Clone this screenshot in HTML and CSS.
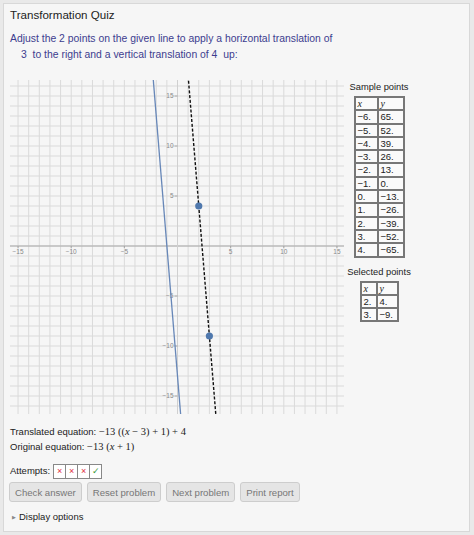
FILE: index.html
```html
<!DOCTYPE html>
<html lang="en">
<head>
    <meta charset="UTF-8">
    <meta name="viewport" content="width=device-width, initial-scale=1.0">
    <title>Transformation Quiz</title>
    <link rel="stylesheet" href="styles.css">
</head>
<body>
    <div class="quiz">
        <div class="title">Transformation Quiz</div>
        <div class="prompt">
            <div>Adjust the 2 points on the given line to apply a horizontal translation of</div>
            <div class="indent">3&nbsp; to the right and a vertical translation of 4&nbsp; up:</div>
        </div>

        <div class="work">
            <svg id="plot" class="plot" width="334" height="334" viewBox="0 0 334 334"></svg>
            <div class="side">
                <div class="caption">Sample points</div>
                <table class="pts sample">
                    <thead><tr><th>x</th><th>y</th></tr></thead>
                    <tbody id="sample-rows"></tbody>
                </table>
                <div class="caption second">Selected points</div>
                <table class="pts selected">
                    <thead><tr><th>x</th><th>y</th></tr></thead>
                    <tbody>
                        <tr><td>2.</td><td>4.</td></tr>
                        <tr><td>3.</td><td>&minus;9.</td></tr>
                    </tbody>
                </table>
            </div>
        </div>

        <div class="eqs">
            <div>Translated equation: <span class="math">&minus;13 ((<i>x</i> &minus; 3) + 1) + 4</span></div>
            <div>Original equation: <span class="math">&minus;13 (<i>x</i> + 1)</span></div>
        </div>

        <div class="attempts">
            <span>Attempts:</span>
            <span class="marks">
                <span class="mark wrong">&times;</span>
                <span class="mark wrong">&times;</span>
                <span class="mark wrong">&times;</span>
                <span class="mark right">&#10003;</span>
            </span>
        </div>

        <div class="buttons">
            <button class="btn">Check answer</button>
            <button class="btn">Reset problem</button>
            <button class="btn">Next problem</button>
            <button class="btn">Print report</button>
        </div>

        <div class="options"><span class="arrow">&#9654;</span>Display options</div>
    </div>

    <script>
        const NS = 'http://www.w3.org/2000/svg';
        const OX = 167.5, OY = 166, SX = 10.63, SY = 10;
        const plot = document.getElementById('plot');

        const px = x => OX + x * SX;
        const py = y => OY - y * SY;

        function add(tag, attrs, text) {
            const el = document.createElementNS(NS, tag);
            for (const k in attrs) el.setAttribute(k, attrs[k]);
            if (text !== undefined) el.textContent = text;
            plot.appendChild(el);
            return el;
        }

        function fmt(n) {
            return (n < 0 ? '\u2212' + Math.abs(n) : n) + '.';
        }

        // сетка
        for (let i = -15; i <= 15; i++) {
            add('line', { x1: px(i), y1: 0, x2: px(i), y2: 334, class: 'grid' });
        }
        for (let j = -16; j <= 16; j++) {
            add('line', { x1: 0, y1: py(j), x2: 334, y2: py(j), class: 'grid' });
        }

        // оси
        add('line', { x1: 0, y1: OY, x2: 334, y2: OY, class: 'axis' });
        add('line', { x1: OX, y1: 0, x2: OX, y2: 334, class: 'axis-y' });

        [-15, -10, -5, 5, 10, 15].forEach(v => {
            add('line', { x1: px(v), y1: OY, x2: px(v), y2: OY + 2, class: 'tick' });
            add('text', { x: px(v), y: OY + 8, class: 'label', 'text-anchor': 'middle' }, v < 0 ? '\u2212' + (-v) : v);
            add('line', { x1: OX - 3, y1: py(v), x2: OX, y2: py(v), class: 'tick' });
            add('text', { x: OX - 4, y: py(v) + 2.3, class: 'label', 'text-anchor': 'end' }, v < 0 ? '\u2212' + (-v) : v);
        });

        // исходная прямая y = -13(x + 1)
        const orig = y => -1 - y / 13;
        add('line', { x1: px(orig(17)), y1: py(17), x2: px(orig(-17)), y2: py(-17), class: 'orig' });

        // перенесённая прямая
        const moved = y => 2 + (4 - y) / 13;
        add('line', { x1: px(moved(17)), y1: py(17), x2: px(moved(-17)), y2: py(-17), class: 'moved' });

        [[2, 4], [3, -9]].forEach(([x, y]) => {
            add('circle', { cx: px(x), cy: py(y), r: 3.6, class: 'pt' });
        });

        // таблица точек
        const rows = document.getElementById('sample-rows');
        for (let x = -6; x <= 4; x++) {
            const tr = document.createElement('tr');
            tr.innerHTML = `<td>${fmt(x)}</td><td>${fmt(-13 * (x + 1))}</td>`;
            rows.appendChild(tr);
        }
    </script>
</body>
</html>
```

FILE: styles.css
```css
body {
    margin: 0;
    background-color: #e9e9e9;
    font-family: 'Liberation Sans', Arial, sans-serif;
    color: #222;
}

.quiz {
    box-sizing: border-box;
    margin: 3px 4px 0 3px;
    height: 529px;
    padding: 4px 6px 0 6px;
    background-color: #f6f6f6;
    border: 1px solid #d8d8d8;
}

.title {
    font-size: 11.6px;
    line-height: 14px;
}

.prompt {
    margin-top: 9px;
    font-size: 10.4px;
    line-height: 16px;
    color: #3d3d8f;
}

.prompt .indent {
    padding-left: 11px;
}

.work {
    display: flex;
    margin-top: 17px;
}

.plot {
    display: block;
    flex: none;
}

.grid {
    stroke: #dadada;
    stroke-width: 1;
}

.axis {
    stroke: #aaa;
    stroke-width: 1;
}

.axis-y {
    stroke: #d0d0d0;
    stroke-width: 1;
}

.tick {
    stroke: #999;
    stroke-width: 0.8;
}

.label {
    font-family: 'Liberation Sans', Arial, sans-serif;
    font-size: 6.5px;
    fill: #888;
}

.orig {
    stroke: #6787b8;
    stroke-width: 1.3;
}

.moved {
    stroke: #111;
    stroke-width: 1.4;
    stroke-dasharray: 3 1.8;
}

.pt {
    fill: #4f78ad;
}

.side {
    width: 70px;
    display: flex;
    flex-direction: column;
    align-items: center;
    padding-top: 1px;
}

.caption {
    font-size: 9.3px;
    line-height: 12px;
    white-space: nowrap;
}

.caption.second {
    margin-top: 8px;
}

.pts {
    margin-top: 3px;
    border-collapse: separate;
    border-spacing: 0;
    border: 1px solid #777;
    font-size: 9.5px;
    background-color: #fafafa;
}

.pts th,
.pts td {
    border: 1px solid #777;
    padding: 0 2px;
    line-height: 11.3px;
    text-align: left;
    font-weight: normal;
}

.pts th {
    font-family: 'Liberation Serif', serif;
    font-style: italic;
    font-size: 10px;
}

.sample td:first-child,
.sample th:first-child {
    width: 17px;
}

.sample td:last-child,
.sample th:last-child {
    width: 20px;
}

.selected td:first-child,
.selected th:first-child {
    width: 10px;
}

.selected td:last-child,
.selected th:last-child {
    width: 15px;
}

.eqs {
    margin-top: 10px;
    font-size: 9.5px;
    line-height: 15px;
}

.math {
    font-family: 'Liberation Serif', serif;
    font-size: 10.5px;
}

.attempts {
    margin-top: 9px;
    display: flex;
    align-items: center;
    gap: 3px;
    font-size: 9.5px;
    line-height: 16px;
}

.marks {
    display: inline-flex;
    border: 1px solid #888;
    background-color: #fff;
}

.mark {
    width: 11px;
    height: 13px;
    line-height: 13px;
    text-align: center;
    font-size: 9px;
    border-left: 1px solid #888;
}

.mark:first-child {
    border-left: none;
}

.wrong {
    color: #e0283c;
}

.right {
    color: #3c9a3c;
}

.buttons {
    display: flex;
    gap: 5px;
    margin-top: 3px;
    margin-left: -1px;
}

.btn {
    height: 20px;
    padding: 0 5px;
    font-family: 'Liberation Sans', Arial, sans-serif;
    font-size: 9.6px;
    color: #777;
    background-color: #e5e5e5;
    border: 1px solid #cdcdcd;
    border-radius: 3px;
}

.options {
    margin-top: 8px;
    font-size: 9.5px;
    line-height: 14px;
}

.arrow {
    display: inline-block;
    font-size: 5px;
    color: #888;
    margin: 0 3px 0 2px;
    vertical-align: 1px;
}
```
